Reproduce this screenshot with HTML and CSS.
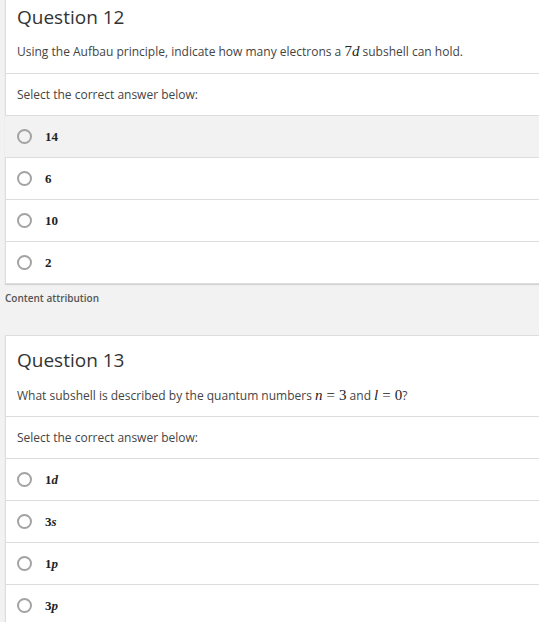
FILE: index.html
```html
<!DOCTYPE html>
<html>
<head>
<meta charset="utf-8">
<link rel="stylesheet" href="styles.css">
</head>
<body>
<div class="page">
  <section class="card card-first">
    <div class="q-head">
      <h2 class="q-title">Question 12</h2>
      <p class="q-text">Using the Aufbau principle, indicate how many electrons a <span class="math"><span class="mn">7</span><span class="mi">d</span></span> subshell can hold.</p>
    </div>
    <div class="q-prompt">Select the correct answer below:</div>
    <ul class="options">
      <li class="option option-hover"><span class="radio"></span><span class="math opt"><span class="mn">14</span></span></li>
      <li class="option"><span class="radio"></span><span class="math opt"><span class="mn">6</span></span></li>
      <li class="option"><span class="radio"></span><span class="math opt"><span class="mn">10</span></span></li>
      <li class="option"><span class="radio"></span><span class="math opt"><span class="mn">2</span></span></li>
    </ul>
  </section>
  <div class="attribution">Content attribution</div>
  <section class="card card-second">
    <div class="q-head">
      <h2 class="q-title">Question 13</h2>
      <p class="q-text">What subshell is described by the quantum numbers <span class="math"><span class="mi">n</span><span class="mo">=</span><span class="mn">3</span></span> and <span class="math"><span class="mi">l</span><span class="mo">=</span><span class="mn">0</span></span>?</p>
    </div>
    <div class="q-prompt">Select the correct answer below:</div>
    <ul class="options">
      <li class="option"><span class="radio"></span><span class="math opt"><span class="mn">1</span><span class="mi">d</span></span></li>
      <li class="option"><span class="radio"></span><span class="math opt"><span class="mn">3</span><span class="mi">s</span></span></li>
      <li class="option"><span class="radio"></span><span class="math opt"><span class="mn">1</span><span class="mi">p</span></span></li>
      <li class="option"><span class="radio"></span><span class="math opt"><span class="mn">3</span><span class="mi">p</span></span></li>
    </ul>
  </section>
</div>
</body>
</html>
```

FILE: styles.css
```css
html, body {
  margin: 0;
  padding: 0;
  background: #f2f2f2;
}
body {
  font-family: "Open Sans", "Liberation Sans", sans-serif;
  color: #333;
  overflow: hidden;
}
.page {
  padding-left: 5px;
}
.card {
  background: #fff;
  border: 1px solid #ddd;
  border-right: none;
  box-shadow: 0 1px 1px rgba(0, 0, 0, 0.12);
}
.card-first {
  margin-top: -8px;
}
.card-second {
  margin-top: 30px;
}
.q-head {
  padding: 12px 11px 11px;
  border-bottom: 1px solid #ddd;
}
.card-second .q-head {
  padding-bottom: 10px;
}
.q-title {
  margin: 0;
  font-size: 19px;
  font-weight: 400;
  line-height: 24px;
  color: #333;
}
.q-text {
  margin: 12px 0 0;
  font-size: 12px;
  line-height: 20px;
  color: #444;
}
.card-second .q-text {
  margin-top: 13px;
}
.q-prompt {
  padding: 11px 11px 10px;
  font-size: 12px;
  line-height: 20px;
  color: #444;
}
.math {
  font-family: "Liberation Serif", "DejaVu Serif", serif;
  font-size: 15px;
  color: #222;
}
.mn {
  font-weight: 400;
}
.mi {
  font-style: italic;
  font-weight: 400;
}
.mo {
  margin: 0 4px;
  font-weight: 400;
}
.options {
  list-style: none;
  margin: 0;
  padding: 0;
}
.option {
  display: flex;
  align-items: center;
  height: 41px;
  border-top: 1px solid #ddd;
  padding-left: 11px;
}
.option-hover {
  background: #f2f2f2;
  margin-left: -1px;
  padding-left: 12px;
}
.radio {
  width: 11px;
  height: 11px;
  border: 2px solid #a3a3a3;
  border-radius: 50%;
  flex: none;
}
.opt {
  margin-left: 13px;
  font-size: 13px;
  font-weight: 600;
}
.opt .mn, .opt .mi {
  font-weight: 700;
}
.attribution {
  padding-top: 7px;
  font-size: 10px;
  font-weight: 600;
  line-height: 14px;
  color: #555;
}
```
